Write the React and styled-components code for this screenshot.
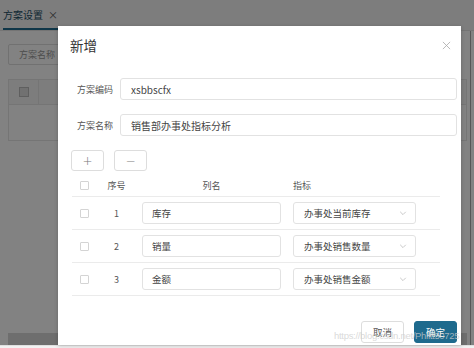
import React from "react";
import styled, { createGlobalStyle } from "styled-components";

const GlobalStyle = createGlobalStyle`
  html, body {
    margin: 0;
    padding: 0;
    background: #f0f0f0;
    font-family: "Noto Sans CJK SC", "Noto Sans", sans-serif;
  }
  * { box-sizing: border-box; }
`;

const Screen = styled.div`
  width: 474px;
  height: 348px;
  display: flex;
  flex-direction: column;
  overflow: hidden;
`;

const Stage = styled.div`
  position: relative;
  height: 345px;
  background: #fff;
  display: flex;
  flex-direction: column;
`;

const BottomStrip = styled.div`
  flex: 1;
  background: #f2f2f2;
  border-top: 1px solid #e0e0e0;
`;

/* page underneath the mask */
const TabBar = styled.div`
  height: 31px;
  background: #f5f5f5;
  border-bottom: 1px solid #e4e4e4;
  display: flex;
  align-items: flex-end;
  padding-left: 3px;
`;

const Tab = styled.div`
  height: 100%;
  display: flex;
  align-items: center;
  gap: 5px;
  font-size: 10px;
  color: #1d4e66;
  border-bottom: 2px solid #1e6a8d;
  padding-right: 2px;
  span { color: #555; font-size: 10px; }
`;

const PageBody = styled.div`
  flex: 1;
  display: flex;
  flex-direction: column;
  gap: 14px;
  padding: 13px 3px 0 8px;
  border-right: 1px solid #aaa;
  margin-right: 3px;
`;

const SearchBox = styled.div`
  width: 80px;
  height: 21px;
  border: 1px solid #ddd;
  border-radius: 2px;
  font-size: 9px;
  color: #999;
  display: flex;
  align-items: center;
  padding-left: 10px;
`;

const BgTable = styled.div`
  height: 62px;
  border: 1px solid #e6e6e6;
  display: flex;
  flex-direction: column;
`;

const BgHead = styled.div`
  height: 25px;
  display: flex;
  background: #f6f6f6;
  border-bottom: 1px solid #e6e6e6;
  div {
    width: 30px;
    border-right: 1px solid #e6e6e6;
    display: flex;
    align-items: center;
    justify-content: center;
  }
  div::after {
    content: "";
    width: 8px;
    height: 8px;
    border: 1px solid #bbb;
    background: #ddd;
  }
`;

const PageFooter = styled.div`
  height: 12px;
  background: #d8d8d8;
  margin-top: auto;
`;

const Mask = styled.div`
  position: absolute;
  inset: 0;
  background: rgba(0, 0, 0, 0.49);
`;

/* dialog */
const Dialog = styled.div`
  position: absolute;
  left: 58px;
  top: 26px;
  width: 403px;
  height: 319px;
  background: #fff;
  box-shadow: 0 1px 4px rgba(0, 0, 0, 0.2);
  display: flex;
  flex-direction: column;
`;

const DialogHead = styled.div`
  height: 38px;
  display: flex;
  align-items: center;
  justify-content: space-between;
  padding: 0 10px 0 12px;
`;

const Title = styled.div`
  font-size: 13.5px;
  color: #333;
`;

const Close = styled.svg`
  width: 9px;
  height: 9px;
`;

const DialogBody = styled.div`
  flex: 1;
  display: flex;
  flex-direction: column;
  padding: 14px 4px 0 12px;
`;

const FormRow = styled.div`
  display: flex;
  align-items: center;
  gap: 7px;
  margin-bottom: 14px;
`;

const Label = styled.div`
  width: 43px;
  text-align: right;
  font-size: 9px;
  color: #555;
  white-space: nowrap;
`;

const Field = styled.div`
  flex: ${p => (p.$grow ? 1 : "none")};
  width: ${p => p.$w || "auto"};
  height: 22px;
  border: 1px solid #e2e2e2;
  border-radius: 3px;
  display: flex;
  align-items: center;
  justify-content: space-between;
  padding: 0 8px 0 ${p => p.$pl || 10}px;
  font-size: ${p => p.$fs || 10}px;
  color: #444;
`;

const Chevron = styled.svg`
  width: 8px;
  height: 8px;
`;

const ToolRow = styled.div`
  display: flex;
  gap: 10px;
  padding-left: 1px;
  margin-bottom: 3px;
`;

const ToolButton = styled.div`
  width: 33px;
  height: 21px;
  border: 1px solid #ddd;
  border-radius: 3px;
  display: flex;
  align-items: center;
  justify-content: center;
  font-size: 12px;
  color: #777;
  font-family: "DejaVu Sans", sans-serif;
  font-weight: 300;
`;

const Table = styled.div`
  width: 368px;
  margin-left: 2px;
  display: flex;
  flex-direction: column;
`;

const Row = styled.div`
  display: grid;
  grid-template-columns: 24px 41px 149px 1fr;
  align-items: center;
  height: ${p => (p.$head ? "23px" : "33px")};
  border-bottom: 1px solid #ebebeb;
  font-size: 9px;
  color: #555;
`;

const Cell = styled.div`
  display: flex;
  align-items: center;
  justify-content: ${p => p.$align || "flex-start"};
  padding-left: ${p => p.$pl || 0}px;
`;

const Check = styled.div`
  width: 9px;
  height: 9px;
  border: 1px solid #d4d4d4;
  border-radius: 1px;
  background: #fff;
`;

const DialogFoot = styled.div`
  height: 24px;
  display: flex;
  justify-content: flex-end;
  align-items: flex-start;
  gap: 10px;
  padding: 0 4px 0 0;
`;

const Button = styled.div`
  width: 43px;
  height: 22px;
  border-radius: 3px;
  display: flex;
  align-items: center;
  justify-content: center;
  font-size: 9.5px;
  color: ${p => (p.$primary ? "#fff" : "#555")};
  background: ${p => (p.$primary ? "#1e6a8d" : "#fff")};
  border: 1px solid ${p => (p.$primary ? "#1e6a8d" : "#ddd")};
`;

const Watermark = styled.div`
  position: absolute;
  left: 334px;
  top: 330px;
  font-family: "Liberation Sans", sans-serif;
  font-size: 9.5px;
  letter-spacing: -0.3px;
  color: rgba(205, 205, 205, 0.75);
  white-space: nowrap;
  pointer-events: none;
`;

const rows = [
  { no: 1, name: "库存", index: "办事处当前库存" },
  { no: 2, name: "销量", index: "办事处销售数量" },
  { no: 3, name: "金额", index: "办事处销售金额" },
];

const Down = () => (
  <Chevron viewBox="0 0 10 10">
    <path d="M1.5 3.5 L5 7 L8.5 3.5" fill="none" stroke="#bbb" strokeWidth="1" />
  </Chevron>
);

const App = () => (
  <Screen>
    <GlobalStyle />
    <Stage>
      <TabBar>
        <Tab>
          方案设置<span>×</span>
        </Tab>
      </TabBar>
      <PageBody>
        <SearchBox>方案名称</SearchBox>
        <BgTable>
          <BgHead>
            <div />
          </BgHead>
        </BgTable>
        <PageFooter />
      </PageBody>
      <Mask />
      <Dialog>
        <DialogHead>
          <Title>新增</Title>
          <Close viewBox="0 0 10 10">
            <path d="M1 1 L9 9 M9 1 L1 9" stroke="#aaa" strokeWidth="0.9" fill="none" />
          </Close>
        </DialogHead>
        <DialogBody>
          <FormRow>
            <Label>方案编码</Label>
            <Field $grow>xsbbscfx</Field>
          </FormRow>
          <FormRow>
            <Label>方案名称</Label>
            <Field $grow>销售部办事处指标分析</Field>
          </FormRow>
          <ToolRow>
            <ToolButton>+</ToolButton>
            <ToolButton>−</ToolButton>
          </ToolRow>
          <Table>
            <Row $head>
              <Cell $align="center"><Check /></Cell>
              <Cell $align="center">序号</Cell>
              <Cell $align="center">列名</Cell>
              <Cell $pl={7}>指标</Cell>
            </Row>
            {rows.map(r => (
              <Row key={r.no}>
                <Cell $align="center"><Check /></Cell>
                <Cell $align="center">{r.no}</Cell>
                <Cell $pl={5}>
                  <Field $w="139px" $pl={9} $fs={9.5}>{r.name}</Field>
                </Cell>
                <Cell $pl={7}>
                  <Field $w="123px" $pl={10} $fs={9.5}>
                    {r.index}
                    <Down />
                  </Field>
                </Cell>
              </Row>
            ))}
          </Table>
        </DialogBody>
        <DialogFoot>
          <Button>取消</Button>
          <Button $primary>确定</Button>
        </DialogFoot>
      </Dialog>
      <Watermark>https://blog.csdn.net/Philtt50725</Watermark>
    </Stage>
    <BottomStrip />
  </Screen>
);

export default App;
